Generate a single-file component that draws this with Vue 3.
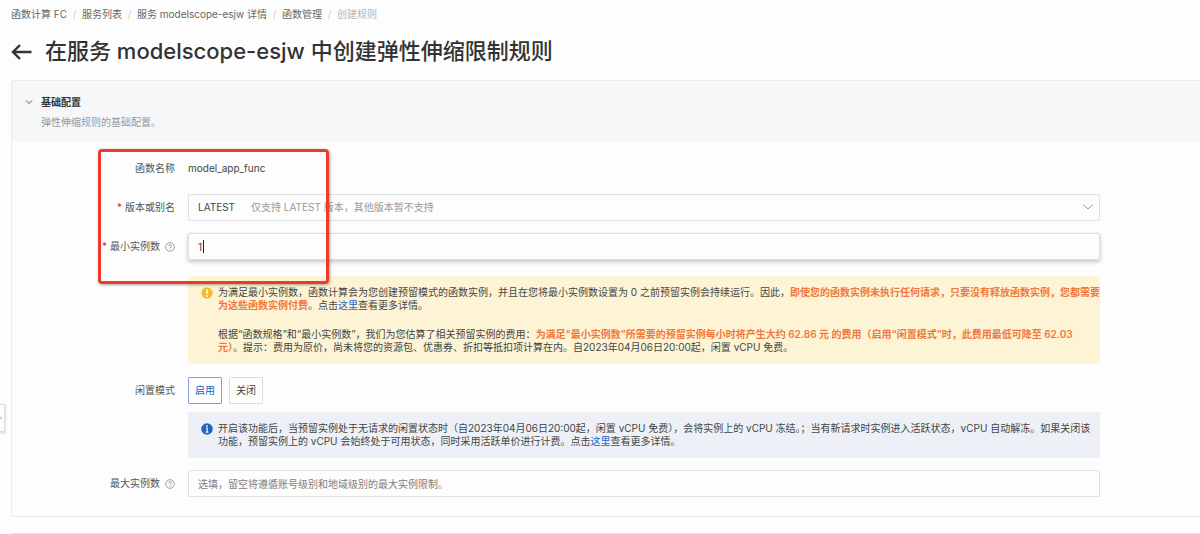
<script setup>
import { ref } from 'vue'

const crumbs = ['函数计算 FC', '服务列表', '服务 modelscope-esjw 详情', '函数管理']
const version = ref('LATEST')
const minInstances = ref('1')
const maxInstances = ref('')
const idle = ref(true)
</script>

<template>
  <div class="page">
    <nav class="crumbs" aria-label="面包屑">
      <template v-for="c in crumbs" :key="c">
        <a href="#">{{ c }}</a><span class="sep">/</span>
      </template>
      <span class="current">创建规则</span>
    </nav>

    <header class="title">
      <button class="back" type="button" aria-label="返回">
        <svg width="22" height="20" viewBox="0 0 22 20" fill="none" stroke="#333" stroke-width="2.4">
          <path d="M2 10H20.5M9 3L2 10L9 17" />
        </svg>
      </button>
      <h1>在服务 modelscope-esjw 中创建弹性伸缩限制规则</h1>
    </header>

    <section class="card">
      <div class="card-head">
        <svg class="fold" width="8" height="8" viewBox="0 0 8 8" fill="none" stroke="#555">
          <path d="M1 2.5L4 5.5L7 2.5" />
        </svg>
        <div>
          <h2>基础配置</h2>
          <p>弹性伸缩规则的基础配置。</p>
        </div>
      </div>

      <form class="form" @submit.prevent>
        <div class="row">
          <span class="label">函数名称</span>
          <span class="value">model_app_func</span>
        </div>

        <div class="row">
          <label class="label" for="version"><i>*</i>版本或别名</label>
          <div class="control">
            <select id="version" v-model="version">
              <option>LATEST</option>
            </select>
            <span class="hint">仅支持 LATEST 版本，其他版本暂不支持</span>
            <svg class="arrow" width="10" height="8" viewBox="0 0 10 8" fill="none" stroke="#999">
              <path d="M0.5 1.5L5 6L9.5 1.5" />
            </svg>
          </div>
        </div>

        <div class="row">
          <label class="label" for="min"><i>*</i>最小实例数
            <svg class="help" width="10" height="10" viewBox="0 0 10 10" fill="none" stroke="#888" stroke-width="0.8">
              <circle cx="5" cy="5" r="4.3" />
              <path d="M3.6 4.1C3.6 2.2 6.4 2.2 6.4 4C6.4 5 5 5 5 6.1M5 6.8V7.6" />
            </svg>
          </label>
          <div class="control">
            <input id="min" v-model="minInstances" class="focused" type="text">
            <span class="caret"></span>
          </div>
        </div>

        <div class="notice warn">
          <svg width="12" height="12" viewBox="0 0 12 12">
            <circle cx="6" cy="6" r="5.7" fill="#f2bd2c" />
            <path d="M6 2.4V7" stroke="#fff" stroke-width="1.4" />
            <circle cx="6" cy="9" r="0.9" fill="#fff" />
          </svg>
          <div>
            <p>为满足最小实例数，函数计算会为您创建预留模式的函数实例，并且在您将最小实例数设置为 0 之前预留实例会持续运行。因此，<b>即使您的函数实例未执行任何请求，只要没有释放函数实例，您都需要<br>为这些函数实例付费</b>。点击<a href="#">这里</a>查看更多详情。</p>
            <p>根据“函数规格”和“最小实例数”，我们为您估算了相关预留实例的费用：<b>为满足“最小实例数”所需要的预留实例每小时将产生大约 62.86 元 的费用（启用“闲置模式”时，此费用最低可降至 62.03<br>元）</b>。提示：费用为原价，尚未将您的资源包、优惠券、折扣等抵扣项计算在内。自2023年04月06日20:00起，闲置 vCPU 免费。</p>
          </div>
        </div>

        <div class="row idle">
          <span id="idle-label" class="label">闲置模式</span>
          <div class="toggle" role="group" aria-labelledby="idle-label">
            <button type="button" :class="{ on: idle }" @click="idle = true">启用</button>
            <button type="button" :class="{ on: !idle }" @click="idle = false">关闭</button>
          </div>
        </div>

        <div class="notice info">
          <svg width="12" height="12" viewBox="0 0 12 12">
            <circle cx="6" cy="6" r="5.8" fill="#2463c6" />
            <circle cx="6" cy="3.1" r="0.9" fill="#fff" />
            <path d="M4.9 5.2H6.2V9M4.7 9.1H7.4" fill="none" stroke="#fff" stroke-width="1.1" />
          </svg>
          <div>
            <p>开启该功能后，当预留实例处于无请求的闲置状态时（自2023年04月06日20:00起，闲置 vCPU 免费），会将实例上的 vCPU 冻结。；当有新请求时实例进入活跃状态，vCPU 自动解冻。如果关闭该<br>功能，预留实例上的 vCPU 会始终处于可用状态，同时采用活跃单价进行计费。点击<a href="#">这里</a>查看更多详情。</p>
          </div>
        </div>

        <div class="row">
          <label class="label" for="max">最大实例数
            <svg class="help" width="10" height="10" viewBox="0 0 10 10" fill="none" stroke="#888" stroke-width="0.8">
              <circle cx="5" cy="5" r="4.3" />
              <path d="M3.6 4.1C3.6 2.2 6.4 2.2 6.4 4C6.4 5 5 5 5 6.1M5 6.8V7.6" />
            </svg>
          </label>
          <div class="control">
            <input id="max" v-model="maxInstances" type="text" placeholder="选填，留空将遵循账号级别和地域级别的最大实例限制。">
          </div>
        </div>
      </form>
      <div class="highlight"></div>
    </section>

    <div class="footer-line"></div>
    <button class="handle" type="button" aria-label="展开侧栏">
      <svg width="2" height="4" viewBox="0 0 2 4" fill="none" stroke="#aaa"><path d="M0 0.5L1.5 2L0 3.5" /></svg>
    </button>
  </div>
</template>

<style>
body {
  margin: 0;
  background: #fdfdfd;
}
</style>

<style scoped>
.page {
  position: relative;
  padding: 8px 0 0 11px;
  overflow: hidden;
  color: #444;
  font-family: Inter, "Noto Sans CJK SC", sans-serif;
  font-size: 10px;
  line-height: 13px;
}
h1, h2, p { margin: 0; }
a { color: inherit; text-decoration: none; }
button, input, select { font: inherit; color: inherit; }

.crumbs { display: flex; color: #666; }
.crumbs .sep { width: 15px; text-align: center; color: #ccc; }
.crumbs .current { color: #b5b5b5; }

.title {
  display: flex;
  align-items: center;
  gap: 12px;
  margin: 14px 0 12px;
}
.back {
  display: flex;
  padding: 0;
  border: 0;
  background: none;
}
h1 {
  font-size: 22px;
  line-height: 33px;
  font-weight: 500;
  color: #333;
  white-space: nowrap;
}

.card {
  position: relative;
  border: 1px solid #e9eaec;
  border-right: 0;
  border-radius: 2px 0 0 2px;
}
.card-head {
  display: flex;
  gap: 8px;
  padding: 15px 13px 13px;
  background: #f6f7f9;
}
.fold { margin-top: 2px; }
h2 { font-size: 10px; line-height: 13px; font-weight: 700; color: #333; }
.card-head p { margin-top: 7px; color: #999; }

.form {
  display: flex;
  flex-direction: column;
  gap: 12px;
  padding: 13px 100px 19px 0;
}
.row { display: flex; align-items: center; gap: 13px; min-height: 27px; }
.label {
  display: flex;
  justify-content: flex-end;
  align-items: center;
  flex: 0 0 163px;
  color: #555;
}
.label i { margin-right: 3px; color: #d93026; font-style: normal; }
.help { margin-left: 5px; }
.control { position: relative; flex: 1; }
input, select {
  display: block;
  width: 100%;
  height: 27px;
  box-sizing: border-box;
  margin: 0;
  padding: 0 9px;
  border: 1px solid #e0e0e0;
  border-radius: 2px;
  outline: 0;
  background: #fdfdfd;
  appearance: none;
}
input::placeholder { color: #808080; opacity: 1; }
.focused { border-color: #ddd; box-shadow: 0 2px 4px rgba(0, 0, 0, 0.22); }
.hint {
  position: absolute;
  top: 7px;
  left: 63px;
  color: #999;
  pointer-events: none;
}
.arrow { position: absolute; top: 9px; right: 7px; pointer-events: none; }
.caret { position: absolute; top: 7px; left: 15px; width: 1px; height: 13px; background: #222; }

.notice {
  display: flex;
  gap: 5px;
  margin-left: 176px;
  padding: 10px 0 10px 13px;
  white-space: nowrap;
}
.notice svg { flex: none; margin-top: 1px; }
.warn { margin-top: 4px; background: #fcf4d4; }
.warn p + p { margin-top: 16px; }
.warn b { font-weight: 600; color: #f0783f; }
.idle { margin-top: 1px; }
.info { margin-top: -4px; background: #edf1f7; }
.notice a { color: #2463c6; }

.toggle { display: flex; gap: 7px; }
.toggle button {
  width: 34px;
  height: 27px;
  padding: 0;
  border: 1px solid #ddd;
  border-radius: 1px;
  background: #fdfdfd;
}
.toggle .on { border-color: #7da0e0; color: #2463c6; }

.highlight {
  position: absolute;
  top: 68px;
  left: 86px;
  width: 225px;
  height: 129px;
  border: 3px solid #ee3a2a;
  border-radius: 4px;
  box-shadow: 1px 1px 3px rgba(0, 0, 0, 0.35);
  pointer-events: none;
}
.footer-line { margin-top: 16px; border-top: 1px solid #e3e3e3; }
.handle {
  position: absolute;
  top: 404px;
  left: 0;
  display: flex;
  align-items: center;
  width: 5px;
  height: 28px;
  padding: 0;
  border: 1px solid #ddd;
  border-left: 0;
  background: #fdfdfd;
  box-shadow: 0 1px 3px rgba(0, 0, 0, 0.2);
}
</style>
